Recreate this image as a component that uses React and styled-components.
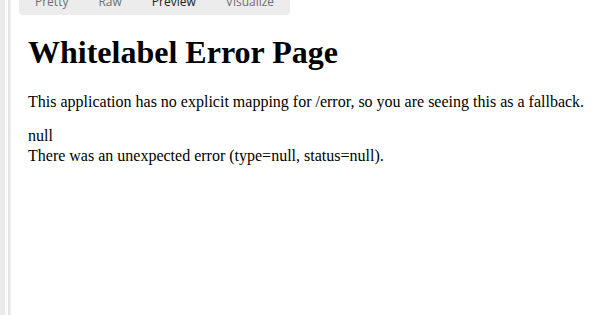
import React from 'react';
import styled, { createGlobalStyle } from 'styled-components';

const GlobalStyle = createGlobalStyle`
  html, body {
    margin: 0;
    padding: 0;
    background: #fff;
  }
  body {
    font-family: "Liberation Serif", "Times New Roman", serif;
  }
`;

const Shell = styled.div`
  display: flex;
  width: 600px;
  height: 315px;
  overflow: hidden;
  background: #fff;
`;

const Rail = styled.div`
  width: 5px;
  flex: none;
  background: #ebebeb;
  margin-right: 3px;
`;

const Divider = styled.div`
  width: 3px;
  flex: none;
  background: linear-gradient(90deg, #dedede, #e9e9e9 50%, #f4f4f4);
`;

const Pane = styled.div`
  flex: 1;
  display: flex;
  flex-direction: column;
  min-width: 0;
`;

const TabBar = styled.div`
  display: flex;
  align-self: flex-start;
  margin: -12px 0 0 8px;
  padding: 5px 1px 4px;
  background: #ececec;
  border-radius: 0 0 4px 4px;
`;

const Tab = styled.span`
  padding: 0 15px;
  font-family: "Open Sans", sans-serif;
  font-size: 12px;
  line-height: 18px;
  color: ${(p) => (p.$active ? '#212121' : '#6f6f6f')};
`;

const Page = styled.div`
  padding: 0 0 0 17px;
  color: #000;
`;

const Title = styled.h1`
  margin: 19px 0 21px;
  font-size: 32px;
  font-weight: bold;
`;

const Text = styled.p`
  margin: 0 0 14px;
  font-size: 16px;
  line-height: 20px;
`;

const Info = styled.div`
  font-size: 16px;
  line-height: 20px;
`;

const tabs = ['Pretty', 'Raw', 'Preview', 'Visualize'];

export default function App() {
  return (
    <>
      <GlobalStyle />
      <Shell>
        <Rail />
        <Divider />
        <Pane>
          <TabBar>
            {tabs.map((t) => (
              <Tab key={t} $active={t === 'Preview'}>{t}</Tab>
            ))}
          </TabBar>
          <Page>
            <Title>Whitelabel Error Page</Title>
            <Text>This application has no explicit mapping for /error, so you are seeing this as a fallback.</Text>
            <Info>null</Info>
            <Info>There was an unexpected error (type=null, status=null).</Info>
          </Page>
        </Pane>
      </Shell>
    </>
  );
}
